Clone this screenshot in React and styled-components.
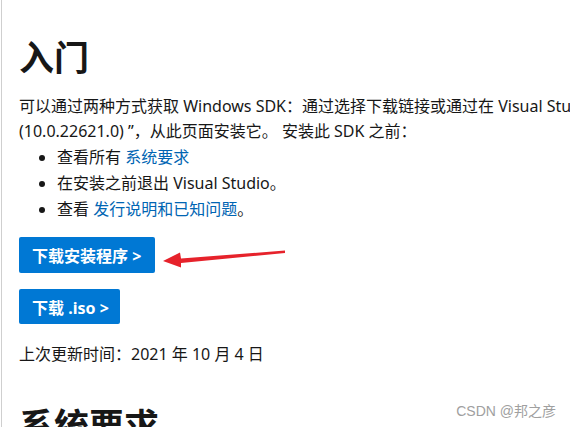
import React from 'react';
import styled, { createGlobalStyle } from 'styled-components';

const GlobalStyle = createGlobalStyle`
  html, body {
    margin: 0;
    padding: 0;
    background: #fff;
  }
  body {
    font-family: "Noto Sans", "Noto Sans CJK SC", sans-serif;
    color: #171717;
    overflow: hidden;
  }
`;

const Page = styled.div`
  position: relative;
  width: 570px;
  height: 427px;
  overflow: hidden;
  box-sizing: border-box;
  border-left: 1px solid #cfcfcf;
  margin-left: 1px;
`;

const Content = styled.main`
  width: 900px;
  padding: 33px 0 0 17px;
  display: flex;
  flex-direction: column;
  align-items: flex-start;
`;

const Heading = styled.h1`
  margin: 0;
  font-family: "Noto Sans CJK SC", sans-serif;
  font-size: 35px;
  line-height: 45px;
  font-weight: 700;
  color: #171717;
`;

const Para = styled.p`
  margin: 16px 0 0;
  font-size: 16px;
  line-height: 25px;
  white-space: nowrap;
`;

const List = styled.ul`
  margin: 0;
  padding-left: 38px;
  font-size: 16px;
  line-height: 26px;
  white-space: nowrap;
`;

const Link = styled.a`
  color: #0065b3;
  text-decoration: none;
`;

const Button = styled.a`
  display: inline-flex;
  align-items: center;
  box-sizing: border-box;
  height: ${p => p.$h}px;
  margin-top: ${p => p.$mt}px;
  padding: 0 ${p => p.$pr}px 0 13px;
  background: #0078d4;
  color: #fff;
  font-size: 16px;
  font-weight: 700;
  border-radius: 2px;
  text-decoration: none;
  white-space: nowrap;
`;

const Updated = styled.p`
  margin: 18px 0 0;
  font-size: 16px;
  line-height: 25px;
`;

const SubHeading = styled(Heading).attrs({ as: 'h2' })`
  margin-top: 34px;
`;

const Arrow = styled.svg`
  position: absolute;
  left: 155px;
  top: 240px;
`;

const Watermark = styled.div`
  position: absolute;
  right: 15px;
  bottom: 7px;
  font-family: "Liberation Sans", "Noto Sans CJK SC", sans-serif;
  font-size: 14px;
  color: #a0a0a0;
  text-shadow: 0 0 2px #fff;
`;

export default function App() {
  return (
    <Page>
      <GlobalStyle />
      <Content>
        <Heading>入门</Heading>
        <Para>
          可以通过两种方式获取 Windows SDK：通过选择下载链接或通过在 Visual Studio 安装程序中选择“Windows SDK
          <br />
          (10.0.22621.0) ”，从此页面安装它。 安装此 SDK 之前：
        </Para>
        <List>
          <li>查看所有 <Link href="#">系统要求</Link></li>
          <li>在安装之前退出 Visual Studio。</li>
          <li>查看 <Link href="#">发行说明和已知问题</Link>。</li>
        </List>
        <Button href="#" $h={36} $mt={15} $pr={14}>下载安装程序 &gt;</Button>
        <Button href="#" $h={35} $mt={16} $pr={11}>下载 .iso &gt;</Button>
        <Updated>上次更新时间：2021 年 10 月 4 日</Updated>
        <SubHeading>系统要求</SubHeading>
      </Content>
      <Arrow width="135" height="35" viewBox="0 0 135 35">
        <path d="M128 10.5 L24 18.5 L23 12.5 L6 21 L24 27.5 L24 23 L128 13 Z" fill="#e6222b" />
      </Arrow>
      <Watermark>CSDN @邦之彦</Watermark>
    </Page>
  );
}
